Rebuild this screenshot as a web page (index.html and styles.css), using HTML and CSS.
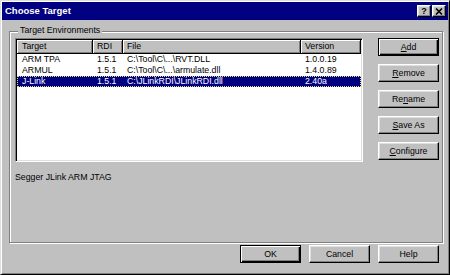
FILE: index.html
```html
<!DOCTYPE html>
<html>
<head>
<meta charset="utf-8">
<link rel="stylesheet" href="styles.css">
</head>
<body>
<div class="window">
  <div class="titlebar">
    <span class="title">Choose Target</span>
    <div class="tb-buttons">
      <div class="tbtn help">?</div>
      <div class="tbtn close"><svg width="8" height="7" viewBox="0 0 8 7"><path d="M1 0.5 L7 6.5 M7 0.5 L1 6.5" stroke="#000" stroke-width="1.6" fill="none"/></svg></div>
    </div>
  </div>
  <div class="main">
    <div class="group">
      <span class="group-label">Target Environments</span>
      <div class="group-top">
        <div class="list">
          <div class="lrow header">
            <div class="hcell">Target</div>
            <div class="hcell">RDI</div>
            <div class="hcell">File</div>
            <div class="hcell">Version</div>
          </div>
          <div class="lrow">
            <div class="cell">ARM TPA</div>
            <div class="cell">1.5.1</div>
            <div class="cell">C:\Tool\C\...\RVT.DLL</div>
            <div class="cell">1.0.0.19</div>
          </div>
          <div class="lrow">
            <div class="cell">ARMUL</div>
            <div class="cell">1.5.1</div>
            <div class="cell">C:\Tool\C\...\armulate.dll</div>
            <div class="cell">1.4.0.89</div>
          </div>
          <div class="lrow sel">
            <div class="cell">J-Link</div>
            <div class="cell">1.5.1</div>
            <div class="cell">C:\JLinkRDI\JLinkRDI.dll</div>
            <div class="cell">2.40a</div>
          </div>
        </div>
        <div class="side">
          <div class="btn default"><span><u>A</u>dd</span></div>
          <div class="btn"><span><u>R</u>emove</span></div>
          <div class="btn"><span>Re<u>n</u>ame</span></div>
          <div class="btn"><span><u>S</u>ave As</span></div>
          <div class="btn"><span><u>C</u>onfigure</span></div>
        </div>
      </div>
      <div class="desc">Segger JLink ARM JTAG</div>
    </div>
    <div class="footer">
      <div class="btn default"><span>OK</span></div>
      <div class="btn"><span>Cancel</span></div>
      <div class="btn"><span>Help</span></div>
    </div>
  </div>
</div>
</body>
</html>
```
FILE: styles.css
```css
* { box-sizing: border-box; }
html, body { margin: 0; padding: 0; }
body {
  width: 450px;
  height: 275px;
  background: #c0c0c0;
  font-family: "Liberation Sans", Arial, sans-serif;
  font-size: 8.75px;
  color: #000;
  overflow: hidden;
}
.window {
  width: 450px;
  height: 275px;
  display: flex;
  flex-direction: column;
  border: 1px solid;
  border-color: #dfdfdf #000 #000 #dfdfdf;
  box-shadow: inset 1px 1px #fff, inset -1px -1px #808080;
  padding: 1px;
}
.titlebar {
  flex: none;
  height: 18px;
  background: #000080;
  display: flex;
  align-items: center;
  padding: 0 2px 0 3px;
}
.title {
  flex: 1;
  color: #fff;
  font-weight: bold;
  font-size: 9.5px;
  line-height: 18px;
}
.tb-buttons { display: flex; gap: 1px; }
.tbtn {
  width: 14px;
  height: 12px;
  background: #c0c0c0;
  border: 1px solid;
  border-color: #fff #000 #000 #fff;
  box-shadow: inset -1px -1px #808080, inset 1px 1px #dfdfdf;
  display: flex;
  align-items: center;
  justify-content: center;
  font-weight: bold;
  font-size: 9px;
  line-height: 10px;
}
.main {
  flex: 1;
  display: flex;
  flex-direction: column;
  padding: 11px 5px 0 7px;
}
.group {
  position: relative;
  height: 212px;
  border: 1px solid #808080;
  box-shadow: inset 1px 1px #fff, 1px 1px #fff;
  padding: 6px 3px 0 5px;
}
.group-label {
  position: absolute;
  top: -7px;
  left: 8px;
  padding: 0 2px;
  background: #c0c0c0;
  line-height: 11px;
}
.group-top { display: flex; gap: 15px; }
.list {
  width: 348px;
  height: 124px;
  background: #fff;
  border: 1px solid;
  border-color: #808080 #fff #fff #808080;
  box-shadow: inset 1px 1px #000, inset -1px -1px #dfdfdf;
  padding: 1px;
}
.lrow {
  display: grid;
  grid-template-columns: 76px 30px 178px 60px;
  height: 11px;
  line-height: 11px;
}
.lrow.header { height: 14px; }
.hcell {
  height: 14px;
  line-height: 12px;
  background: #c0c0c0;
  border-right: 1px solid #000;
  border-bottom: 1px solid #000;
  box-shadow: inset 1px 1px #fff, inset -1px -1px #808080;
  padding-left: 4px;
  white-space: nowrap;
  overflow: hidden;
}
.cell {
  padding-left: 4px;
  white-space: nowrap;
  overflow: hidden;
}
.hcell:first-child, .cell:first-child { padding-left: 5px; }
.lrow.sel {
  background: #000080;
  color: #fff;
  outline: 1px dotted #e0e070;
  outline-offset: -1px;
}
.side { display: flex; flex-direction: column; gap: 8px; }
.btn {
  width: 61px;
  height: 18px;
  background: #c0c0c0;
  border: 1px solid;
  border-color: #fff #000 #000 #fff;
  box-shadow: inset -1px -1px #808080, inset 1px 1px #dfdfdf;
  display: flex;
  align-items: center;
  justify-content: center;
  line-height: 11px;
}
.btn.default {
  border-color: #000;
  box-shadow: inset 1px 1px #fff, inset -1px -1px #000, inset -2px -2px #808080;
}
.desc {
  margin-top: 10px;
  line-height: 11px;
}
.footer {
  display: flex;
  justify-content: flex-end;
  gap: 8px;
  margin: 2px 4px 0 0;
}
```
